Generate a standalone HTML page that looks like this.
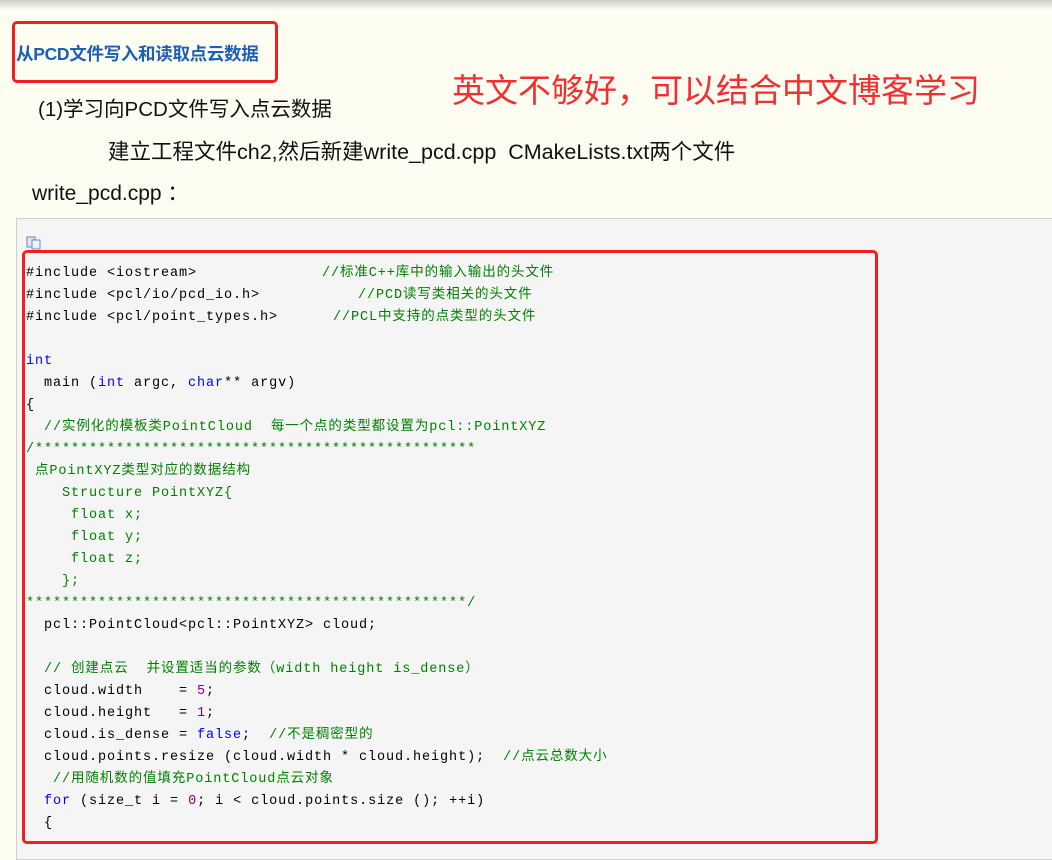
<!DOCTYPE html>
<html><head><meta charset="utf-8"><style>
body{margin:0;width:1052px;height:845px;background:#fdfdf2;position:relative;overflow:hidden;font-family:"Liberation Sans","Noto Sans CJK SC",sans-serif}
.top{position:absolute;left:0;top:0;width:1052px;height:10px;background:linear-gradient(#cfcfc8,#e8e8e0 60%,#fdfdf2)}
.t{position:absolute;white-space:pre}
.code{position:absolute;left:16px;top:218px;width:1040px;height:640px;background:#f5f5f5;border:1px solid #cfcfcf}
.red{position:absolute;border:3px solid #f02020;border-radius:5px}
.l{position:absolute;white-space:pre;font-family:"Liberation Mono","Noto Sans CJK SC",monospace;font-size:13.5px;letter-spacing:0.9px;color:#000;line-height:22px;height:22px}
.k{color:#0000ff}.c{color:#008000}.n{color:#800080}
</style></head><body>
<div class="top"></div>
<div class="red" style="left:12px;top:21px;width:260px;height:56px"></div>
<div class="t" style="left:16px;top:41px;font-size:17.5px;font-weight:bold;color:#1a5fb4;letter-spacing:-0.3px">从PCD文件写入和读取点云数据</div>
<div class="t" style="left:452px;top:64px;font-size:33px;color:#f03030">英文不够好，可以结合中文博客学习</div>
<div class="t" style="left:38px;top:92px;font-size:20.5px;color:#111">(1)学习向PCD文件写入点云数据</div>
<div class="t" style="left:108px;top:135px;font-size:21.5px;color:#111">建立工程文件ch2,然后新建write_pcd.cpp  CMakeLists.txt两个文件</div>
<div class="t" style="left:32px;top:177px;font-size:21px;color:#111">write_pcd.cpp ：</div>
<div class="code"></div>
<svg style="position:absolute;left:26px;top:236px" width="16" height="14"><rect x="1" y="1" width="8" height="10" fill="#dde6f5" stroke="#6a86b8"/><rect x="6" y="4" width="8" height="9" fill="#eef3fb" stroke="#6a86b8"/></svg>
<div class="red" style="left:22px;top:250px;width:850px;height:588px"></div>
<div class="l" style="left:26px;top:263px">#include &lt;iostream&gt;</div><div class="l c" style="left:322px;top:263px">//标准C++库中的输入输出的头文件</div>
<div class="l" style="left:26px;top:285px">#include &lt;pcl/io/pcd_io.h&gt;</div><div class="l c" style="left:358px;top:285px">//PCD读写类相关的头文件</div>
<div class="l" style="left:26px;top:307px">#include &lt;pcl/point_types.h&gt;</div><div class="l c" style="left:333px;top:307px">//PCL中支持的点类型的头文件</div>
<div class="l k" style="left:26px;top:351px">int</div>
<div class="l" style="left:26px;top:373px">  main (<span class="k">int</span> argc, <span class="k">char</span>** argv)</div>
<div class="l" style="left:26px;top:395px">{</div>
<div class="l c" style="left:26px;top:417px">  //实例化的模板类PointCloud  每一个点的类型都设置为pcl::PointXYZ</div>
<div class="l c" style="left:26px;top:439px">/*************************************************</div>
<div class="l c" style="left:26px;top:461px"> 点PointXYZ类型对应的数据结构</div>
<div class="l c" style="left:26px;top:483px">    Structure PointXYZ{</div>
<div class="l c" style="left:26px;top:505px">     float x;</div>
<div class="l c" style="left:26px;top:527px">     float y;</div>
<div class="l c" style="left:26px;top:549px">     float z;</div>
<div class="l c" style="left:26px;top:571px">    };</div>
<div class="l c" style="left:26px;top:593px">*************************************************/</div>
<div class="l" style="left:26px;top:615px">  pcl::PointCloud&lt;pcl::PointXYZ&gt; cloud;</div>
<div class="l c" style="left:26px;top:659px">  // 创建点云  并设置适当的参数（width height is_dense）</div>
<div class="l" style="left:26px;top:681px">  cloud.width    = <span class="n">5</span>;</div>
<div class="l" style="left:26px;top:703px">  cloud.height   = <span class="n">1</span>;</div>
<div class="l" style="left:26px;top:725px">  cloud.is_dense = <span class="k">false</span>;  <span class="c">//不是稠密型的</span></div>
<div class="l" style="left:26px;top:747px">  cloud.points.resize (cloud.width * cloud.height);  <span class="c">//点云总数大小</span></div>
<div class="l c" style="left:26px;top:769px">   //用随机数的值填充PointCloud点云对象</div>
<div class="l" style="left:26px;top:791px">  <span class="k">for</span> (size_t i = <span class="n">0</span>; i &lt; cloud.points.size (); ++i)</div>
<div class="l" style="left:26px;top:813px">  {</div>
</body></html>
